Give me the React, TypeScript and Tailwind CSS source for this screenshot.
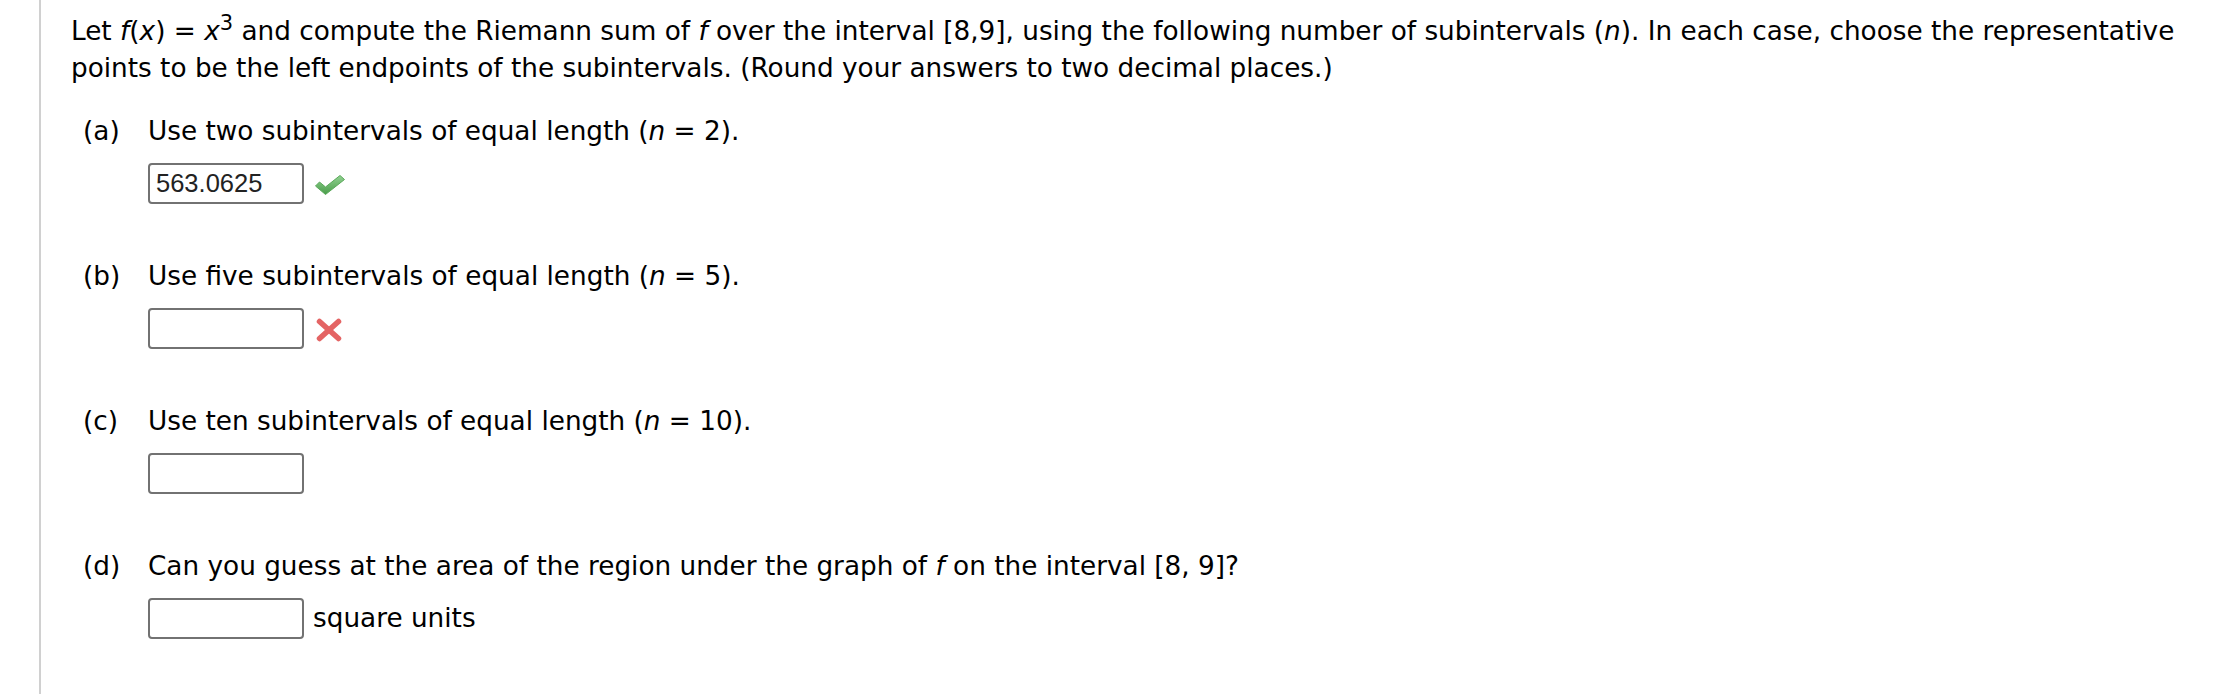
import type { ReactNode } from "react";

function Answer({ value }: { value?: string }) {
  return (
    <div className="flex h-[41px] w-[156px] items-center rounded-[4px] border-2 border-[#727272] bg-white pl-[6px] font-['Liberation_Sans',Arial,sans-serif] text-[25.5px] leading-none text-[#222]">
      {value}
    </div>
  );
}

function Check() {
  return (
    <svg width="32" height="22" viewBox="0 0 32 22" className="ml-[10px] mt-[2px]">
      <defs>
        <linearGradient id="chk" x1="0" y1="0" x2="0" y2="1">
          <stop offset="0" stopColor="#92d292" />
          <stop offset="1" stopColor="#4a9d4a" />
        </linearGradient>
      </defs>
      <path
        d="M1.5 12 L5.5 8 L11.5 13 L26 1.5 L30.5 5.5 L11.5 20.5 Z"
        fill="url(#chk)"
        stroke="#5aa95a"
        strokeWidth="1"
        strokeLinejoin="round"
      />
    </svg>
  );
}

function Cross() {
  return (
    <svg width="28" height="26" viewBox="0 0 28 26" className="ml-[11px] mt-[3px]">
      <g stroke="#e46464" strokeWidth="5.5" strokeLinecap="round">
        <line x1="4.5" y1="4.5" x2="23.5" y2="21.5" />
        <line x1="23.5" y1="4.5" x2="4.5" y2="21.5" />
      </g>
    </svg>
  );
}

function Part({ label, children, answer }: { label: string; children: ReactNode; answer: ReactNode }) {
  return (
    <div className="pl-[12px]">
      <div className="flex">
        <span className="w-[65px]">({label})</span>
        <span>{children}</span>
      </div>
      <div className="ml-[65px] mt-[13px] flex items-center">{answer}</div>
    </div>
  );
}

export default function App() {
  return (
    <div className="h-[694px] w-[2232px] bg-white font-['DejaVu_Sans',Verdana,sans-serif] text-[26.3px] leading-[37px] text-black">
      <div className="ml-[39px] h-full border-l-2 border-[#d0d0d0] pl-[30px] pt-[13px]">
        <p>
          Let <i>f</i>(<i>x</i>) = <i>x</i>
          <span className="relative -top-[10px] text-[21px] leading-none">3</span> and compute the Riemann sum of{" "}
          <i>f</i> over the interval [8,9], using the following number of subintervals (<i>n</i>). In each case,
          choose the representative
          <br />
          points to be the left endpoints of the subintervals. (Round your answers to two decimal places.)
        </p>

        <div className="mt-[26px] flex flex-col gap-[54px]">
          <Part
            label="a"
            answer={
              <>
                <Answer value="563.0625" />
                <Check />
              </>
            }
          >
            Use two subintervals of equal length (<i>n</i> = 2).
          </Part>
          <Part
            label="b"
            answer={
              <>
                <Answer />
                <Cross />
              </>
            }
          >
            Use five subintervals of equal length (<i>n</i> = 5).
          </Part>
          <Part label="c" answer={<Answer />}>
            Use ten subintervals of equal length (<i>n</i> = 10).
          </Part>
          <Part
            label="d"
            answer={
              <>
                <Answer />
                <span className="ml-[9px]">square units</span>
              </>
            }
          >
            Can you guess at the area of the region under the graph of <i>f</i> on the interval [8, 9]?
          </Part>
        </div>
      </div>
    </div>
  );
}
